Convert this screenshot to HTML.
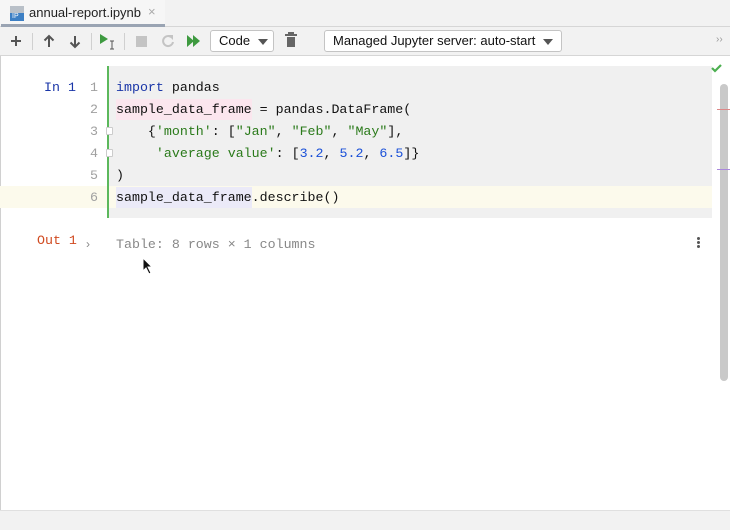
<!DOCTYPE html>
<html><head><style>
*{margin:0;padding:0;box-sizing:border-box}
body{width:730px;height:530px;overflow:hidden;background:#fff;font-family:"Liberation Sans",sans-serif;position:relative}
.abs{position:absolute}
.mono{font-family:"Liberation Mono",monospace;font-size:13.3px;white-space:pre}
.ln{position:absolute;left:80px;width:18px;text-align:right;color:#a0a0a0}
.cd{position:absolute;left:116px;color:#111}
.kw{color:#1a36a8}.st{color:#2a7a1a}.nu{color:#1a50d8}
.btn{position:absolute;top:30px;height:22px;border:1px solid #c4c4c4;border-radius:3px;background:#fff;font-size:13px;color:#111;line-height:20px;padding-left:8px}
.tri{display:inline-block;width:0;height:0;border-left:5px solid transparent;border-right:5px solid transparent;border-top:6px solid #555;vertical-align:middle;margin-left:8px}
</style></head><body>
<div class="abs" style="left:0;top:0;width:730px;height:27px;background:#f2f2f2;border-bottom:1px solid #d6d6d6"></div>
<div class="abs" style="left:0;top:0;width:165px;height:26px;background:#f6f6f6"></div>
<div class="abs" style="left:1px;top:24px;width:164px;height:3px;background:#9aa4b3"></div>
<div class="abs" style="left:10px;top:6px;width:14px;height:15px;background:#b9c0c8"></div>
<div class="abs" style="left:10px;top:13px;width:14px;height:8px;background:#3c7fc4;color:#fff;font-size:7px;line-height:8px;padding-left:2px">IP</div>
<div class="abs" style="left:29px;top:5px;font-size:13px;color:#222">annual-report.ipynb</div>
<div class="abs" style="left:148px;top:4px;font-size:13px;color:#aaa">×</div>
<div class="abs" style="left:0;top:27px;width:730px;height:29px;background:#f2f2f2;border-bottom:1px solid #d6d6d6"></div>
<svg class="abs" style="left:0;top:27px" width="310" height="29">
<g stroke="#555" stroke-width="2" fill="none">
<path d="M16 9v10M11 14h10"/>
<path d="M49 20V9M44.5 13.5L49 9l4.5 4.5"/>
<path d="M75 9v11M70.5 15.5L75 20l4.5-4.5"/>
</g>
<g fill="#d0d0d0"><rect x="32" y="6" width="1" height="17"/><rect x="91" y="6" width="1" height="17"/><rect x="124" y="6" width="1" height="17"/></g>
<path d="M100 7l8 5-8 5z" fill="#3e9a40"/>
<path d="M110 14h4M112 14v8M110 22h4" stroke="#555" stroke-width="1"/>
<rect x="136" y="9" width="11" height="11" fill="#c4c4c4"/>
<path d="M171 10a5 5 0 1 0 2 5" stroke="#c4c4c4" stroke-width="2" fill="none"/><path d="M168 8h5v5z" fill="#c4c4c4"/>
<path d="M187 8l7 6-7 6zM193 8l7 6-7 6z" fill="#3e9a40"/>
<rect x="285" y="7" width="12" height="2" fill="#666"/><rect x="288" y="5" width="6" height="2" fill="#666"/><rect x="287" y="10" width="8" height="10" fill="#666"/>
</svg>
<div class="btn" style="left:210px;width:64px">Code<span class="tri"></span></div>
<div class="btn" style="left:324px;width:238px">Managed Jupyter server: auto-start<span class="tri"></span></div>
<div class="abs" style="left:716px;top:34px;font-size:10px;color:#999">››</div>
<div class="abs" style="left:0;top:56px;width:1px;height:474px;background:#d0d0d0"></div>
<div class="abs" style="left:108px;top:66px;width:604px;height:152px;background:#f0f0f0"></div>
<div class="abs" style="left:0;top:186px;width:712px;height:22px;background:#fcfaec"></div>
<div class="abs" style="left:107px;top:66px;width:2px;height:152px;background:#5cb85c"></div>
<div class="abs" style="left:116px;top:99px;width:136px;height:21px;background:#fbe6ee"></div>
<div class="abs" style="left:116px;top:187px;width:136px;height:21px;background:#ebeaf8"></div>
<div class="abs mono" style="left:44px;top:80px;color:#1a36a8">In 1</div>
<div class="abs mono" style="left:37px;top:233px;color:#d04a20">Out 1</div>
<div class="abs" style="left:86px;top:237px;font-size:12px;color:#888">›</div>
<div class="mono" style="position:absolute;top:1px;left:0">
<span class="ln" style="top:79px">1</span><span class="ln" style="top:101px">2</span><span class="ln" style="top:123px">3</span><span class="ln" style="top:145px">4</span><span class="ln" style="top:167px">5</span><span class="ln" style="top:189px">6</span>
<span class="cd" style="top:79px"><span class="kw">import</span> pandas</span>
<span class="cd" style="top:101px">sample_data_frame = pandas.DataFrame(</span>
<span class="cd" style="top:123px">    {<span class="st">'month'</span>: [<span class="st">"Jan"</span>, <span class="st">"Feb"</span>, <span class="st">"May"</span>],</span>
<span class="cd" style="top:145px">     <span class="st">'average value'</span>: [<span class="nu">3.2</span>, <span class="nu">5.2</span>, <span class="nu">6.5</span>]}</span>
<span class="cd" style="top:167px">)</span>
<span class="cd" style="top:189px">sample_data_frame.describe()</span>
<span class="cd" style="top:236px;color:#888">Table: 8 rows × 1 columns</span>
</div>
<div class="abs" style="left:106px;top:127px;width:7px;height:8px;border:1px solid #ccc;border-radius:1px;background:#fff"></div>
<div class="abs" style="left:106px;top:149px;width:7px;height:8px;border:1px solid #ccc;border-radius:1px;background:#fff"></div>
<div class="abs" style="left:697px;top:237px;width:3px;height:3px;border-radius:50%;background:#555;box-shadow:0 4px 0 #555,0 8px 0 #555"></div>
<svg class="abs" style="left:710px;top:62px" width="14" height="12"><path d="M2 6l3 3 6-6" stroke="#4caf50" stroke-width="2.2" fill="none"/></svg>
<div class="abs" style="left:720px;top:84px;width:8px;height:297px;background:#c9c9c9;border-radius:4px"></div>
<div class="abs" style="left:717px;top:109px;width:13px;height:1px;background:#d88"></div>
<div class="abs" style="left:717px;top:169px;width:13px;height:1px;background:#a8d"></div>
<svg class="abs" style="left:142px;top:257px" width="12" height="18"><path d="M1 1 L1 14 L4 11 L7 17 L9 16 L6 10 L10 10 Z" fill="#111" stroke="#fff" stroke-width="1"/></svg>
<div class="abs" style="left:0;top:510px;width:730px;height:20px;background:#f2f2f2;border-top:1px solid #e0e0e0"></div>
</body></html>
